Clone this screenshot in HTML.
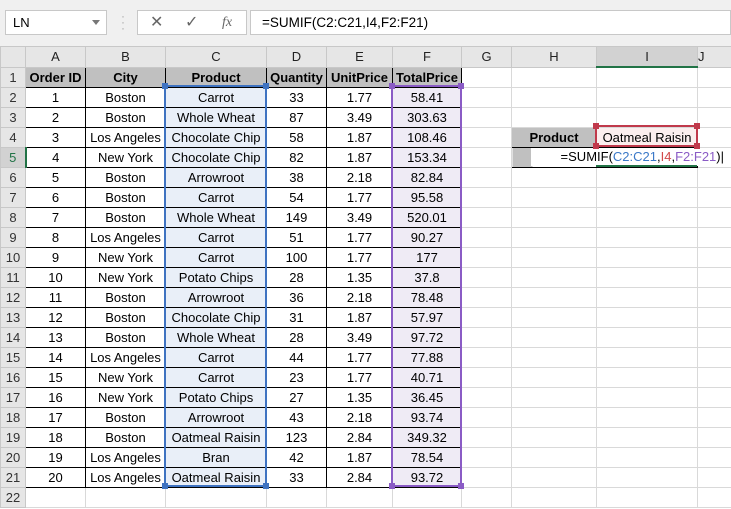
<!DOCTYPE html><html><head><style>
body{margin:0;width:731px;height:509px;overflow:hidden;background:#fff;font-family:"Liberation Sans",sans-serif;position:relative}
.top{position:absolute;left:0;top:0;width:731px;height:46px;background:#f0f0f0}
.box{position:absolute;background:#fff;border:1px solid #c8c8c8;box-sizing:border-box}
table{position:absolute;left:0;top:46px;width:731px;border-collapse:collapse;table-layout:fixed;font-size:13px}
td{height:19px;padding:0;border:1px solid #d9d9d9;text-align:center;white-space:nowrap;overflow:hidden;color:#000;line-height:19px}
tr.h td{background:#e6e6e6;color:#222;font-size:13px;border-color:#c8c8c8}
td.r{background:#e6e6e6;color:#333;font-size:13px;border-color:#c8c8c8}
td.b{border:1px solid #000}
td.g{background:#c0c0c0;font-weight:bold}
td.c{background:#e9eff8}
td.f{background:#efebf5}
.ov{position:absolute;box-sizing:border-box}
.hd{position:absolute;width:6px;height:6px}
</style></head><body>
<div class="top"></div>
<div class="box" style="left:5px;top:10px;width:102px;height:25px;font-size:13px;line-height:23px;padding-left:7px">LN<span style="position:absolute;right:6px;top:9px;border:4px solid transparent;border-top:5px solid #777"></span></div>
<div style="position:absolute;left:121px;top:13px;color:#aaa;font-size:12px;line-height:6px">·<br>·<br>·</div>
<div class="box" style="left:137px;top:10px;width:110px;height:25px;font-size:16px;color:#666;line-height:23px"><span style="position:absolute;left:12px">✕</span><span style="position:absolute;left:47px">✓</span><span style="position:absolute;left:84px;font-family:'Liberation Serif',serif;font-style:italic;font-size:14px">fx</span></div>
<div class="box" style="left:250px;top:10px;width:481px;height:25px;font-size:13.5px;line-height:23px;padding-left:11px">=SUMIF(C2:C21,I4,F2:F21)</div>
<table>
<colgroup><col style="width:25px"><col style="width:60px"><col style="width:80px"><col style="width:101px"><col style="width:60px"><col style="width:66px"><col style="width:69px"><col style="width:50px"><col style="width:85px"><col style="width:101px"><col style="width:34px"></colgroup>
<tr class="h"><td></td><td>A</td><td>B</td><td>C</td><td>D</td><td>E</td><td>F</td><td>G</td><td>H</td><td style="background:#d2d2d2;border-bottom:2px solid #217346">I</td><td style="text-align:left">J</td></tr>
<tr><td class="r">1</td><td class="b g">Order ID</td><td class="b g">City</td><td class="b g">Product</td><td class="b g">Quantity</td><td class="b g">UnitPrice</td><td class="b g">TotalPrice</td><td></td><td></td><td></td><td></td></tr>
<tr><td class="r">2</td><td class="b">1</td><td class="b">Boston</td><td class="b c">Carrot</td><td class="b">33</td><td class="b">1.77</td><td class="b f">58.41</td><td></td><td></td><td></td><td></td></tr>
<tr><td class="r">3</td><td class="b">2</td><td class="b">Boston</td><td class="b c">Whole Wheat</td><td class="b">87</td><td class="b">3.49</td><td class="b f">303.63</td><td></td><td></td><td></td><td></td></tr>
<tr><td class="r">4</td><td class="b">3</td><td class="b">Los Angeles</td><td class="b c">Chocolate Chip</td><td class="b">58</td><td class="b">1.87</td><td class="b f">108.46</td><td></td><td class="b g">Product</td><td class="b" style="background:#fbeeee">Oatmeal Raisin</td><td></td></tr>
<tr><td class="r" style="background:#d2d2d2;color:#217346;border-right:2px solid #217346">5</td><td class="b">4</td><td class="b">New York</td><td class="b c">Chocolate Chip</td><td class="b">82</td><td class="b">1.87</td><td class="b f">153.34</td><td></td><td class="b" style="background:linear-gradient(90deg,#c0c0c0 20px,#fff 20px)"></td><td class="b"></td><td></td></tr>
<tr><td class="r">6</td><td class="b">5</td><td class="b">Boston</td><td class="b c">Arrowroot</td><td class="b">38</td><td class="b">2.18</td><td class="b f">82.84</td><td></td><td></td><td></td><td></td></tr>
<tr><td class="r">7</td><td class="b">6</td><td class="b">Boston</td><td class="b c">Carrot</td><td class="b">54</td><td class="b">1.77</td><td class="b f">95.58</td><td></td><td></td><td></td><td></td></tr>
<tr><td class="r">8</td><td class="b">7</td><td class="b">Boston</td><td class="b c">Whole Wheat</td><td class="b">149</td><td class="b">3.49</td><td class="b f">520.01</td><td></td><td></td><td></td><td></td></tr>
<tr><td class="r">9</td><td class="b">8</td><td class="b">Los Angeles</td><td class="b c">Carrot</td><td class="b">51</td><td class="b">1.77</td><td class="b f">90.27</td><td></td><td></td><td></td><td></td></tr>
<tr><td class="r">10</td><td class="b">9</td><td class="b">New York</td><td class="b c">Carrot</td><td class="b">100</td><td class="b">1.77</td><td class="b f">177</td><td></td><td></td><td></td><td></td></tr>
<tr><td class="r">11</td><td class="b">10</td><td class="b">New York</td><td class="b c">Potato Chips</td><td class="b">28</td><td class="b">1.35</td><td class="b f">37.8</td><td></td><td></td><td></td><td></td></tr>
<tr><td class="r">12</td><td class="b">11</td><td class="b">Boston</td><td class="b c">Arrowroot</td><td class="b">36</td><td class="b">2.18</td><td class="b f">78.48</td><td></td><td></td><td></td><td></td></tr>
<tr><td class="r">13</td><td class="b">12</td><td class="b">Boston</td><td class="b c">Chocolate Chip</td><td class="b">31</td><td class="b">1.87</td><td class="b f">57.97</td><td></td><td></td><td></td><td></td></tr>
<tr><td class="r">14</td><td class="b">13</td><td class="b">Boston</td><td class="b c">Whole Wheat</td><td class="b">28</td><td class="b">3.49</td><td class="b f">97.72</td><td></td><td></td><td></td><td></td></tr>
<tr><td class="r">15</td><td class="b">14</td><td class="b">Los Angeles</td><td class="b c">Carrot</td><td class="b">44</td><td class="b">1.77</td><td class="b f">77.88</td><td></td><td></td><td></td><td></td></tr>
<tr><td class="r">16</td><td class="b">15</td><td class="b">New York</td><td class="b c">Carrot</td><td class="b">23</td><td class="b">1.77</td><td class="b f">40.71</td><td></td><td></td><td></td><td></td></tr>
<tr><td class="r">17</td><td class="b">16</td><td class="b">New York</td><td class="b c">Potato Chips</td><td class="b">27</td><td class="b">1.35</td><td class="b f">36.45</td><td></td><td></td><td></td><td></td></tr>
<tr><td class="r">18</td><td class="b">17</td><td class="b">Boston</td><td class="b c">Arrowroot</td><td class="b">43</td><td class="b">2.18</td><td class="b f">93.74</td><td></td><td></td><td></td><td></td></tr>
<tr><td class="r">19</td><td class="b">18</td><td class="b">Boston</td><td class="b c">Oatmeal Raisin</td><td class="b">123</td><td class="b">2.84</td><td class="b f">349.32</td><td></td><td></td><td></td><td></td></tr>
<tr><td class="r">20</td><td class="b">19</td><td class="b">Los Angeles</td><td class="b c">Bran</td><td class="b">42</td><td class="b">1.87</td><td class="b f">78.54</td><td></td><td></td><td></td><td></td></tr>
<tr><td class="r">21</td><td class="b">20</td><td class="b">Los Angeles</td><td class="b c">Oatmeal Raisin</td><td class="b">33</td><td class="b">2.84</td><td class="b f">93.72</td><td></td><td></td><td></td><td></td></tr>
<tr><td class="r">22</td><td></td><td></td><td></td><td></td><td></td><td></td><td></td><td></td><td></td><td></td></tr>
</table>
<div style="position:absolute;left:531px;top:148px;width:193px;height:18px;line-height:18px;font-size:13px;text-align:right;white-space:nowrap;background:#fff">=SUMIF(<span style="color:#3a78c7">C2:C21</span>,<span style="color:#d24a4a">I4</span>,<span style="color:#8a5bc5">F2:F21</span>)|</div>
<div class="ov" style="left:164px;top:85px;width:103px;height:402px;border:2px solid #3f73c1"></div>
<div class="hd" style="left:162px;top:83px;background:#3f73c1"></div><div class="hd" style="left:263px;top:83px;background:#3f73c1"></div><div class="hd" style="left:162px;top:483px;background:#3f73c1"></div><div class="hd" style="left:263px;top:483px;background:#3f73c1"></div>
<div class="ov" style="left:391px;top:85px;width:71px;height:402px;border:2px solid #8a5bc5"></div>
<div class="hd" style="left:389px;top:83px;background:#8a5bc5"></div><div class="hd" style="left:458px;top:83px;background:#8a5bc5"></div><div class="hd" style="left:389px;top:483px;background:#8a5bc5"></div><div class="hd" style="left:458px;top:483px;background:#8a5bc5"></div>
<div class="ov" style="left:595px;top:125px;width:103px;height:22px;border:2px solid #c0394b"></div>
<div class="hd" style="left:593px;top:123px;background:#c0394b"></div><div class="hd" style="left:694px;top:123px;background:#c0394b"></div><div class="hd" style="left:593px;top:143px;background:#c0394b"></div><div class="hd" style="left:694px;top:143px;background:#c0394b"></div>
<div class="ov" style="left:596px;top:165px;width:101px;height:2px;background:#217346"></div>
</body></html>
